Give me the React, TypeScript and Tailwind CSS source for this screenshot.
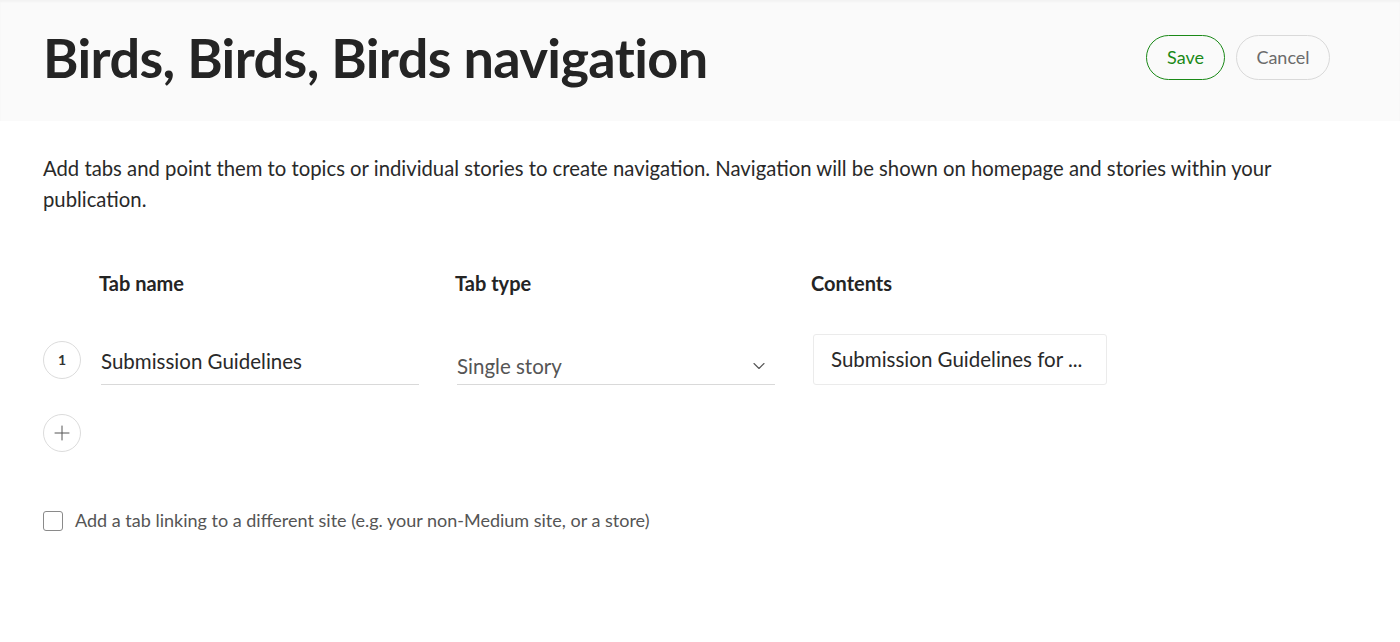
import { ChevronDown, Plus } from "lucide-react";

const font = { fontFamily: "Lato, 'Noto Sans', sans-serif" };

export default function App() {
  return (
    <div className="min-h-[642px] bg-white text-[#292929]" style={font}>
      {/* Header band */}
      <div className="flex h-[121px] items-center justify-between bg-[#fafafa] px-[43px] pb-[6px] shadow-[inset_0_2px_2px_rgba(0,0,0,0.03)]">
        <h1 className="text-[54px] font-bold leading-none tracking-[-0.6px] text-[#242424]">
          Birds, Birds, Birds navigation
        </h1>
        <div className="mr-[27px] flex items-center gap-[11px]">
          <button className="h-[45px] w-[79px] rounded-full border border-[#1a8917] text-[18px] text-[#1a8917]">
            Save
          </button>
          <button className="h-[45px] w-[94px] rounded-full border border-[#d9d9d9] text-[18px] text-[#6b6b6b]">
            Cancel
          </button>
        </div>
      </div>

      <div className="px-[43px]">
        <p className="mt-[32px] max-w-[1270px] text-[20.3px] leading-[31px] text-[#292929]">
          Add tabs and point them to topics or individual stories to create navigation. Navigation will be shown on
          homepage and stories within your publication.
        </p>

        {/* Column headers */}
        <div className="mt-[53px] flex text-[20px] font-bold text-[#242424]">
          <div className="ml-[56px] w-[356px]">Tab name</div>
          <div className="w-[356px]">Tab type</div>
          <div>Contents</div>
        </div>

        {/* Row */}
        <div className="mt-[36px] flex items-center">
          <div className="flex h-[38px] w-[38px] items-center justify-center rounded-full border border-[#dcdcdc] text-[14px] font-bold text-[#333]">
            1
          </div>
          <div className="ml-[20px] w-[318px] self-end border-b border-[#d9d9d9] pb-[10px] text-[20.5px] leading-[26px] text-[#292929]">
            Submission Guidelines
          </div>
          <div className="ml-[38px] flex w-[318px] items-center justify-between self-end border-b border-[#d9d9d9] pb-[5px] text-[20.5px] leading-[26px] text-[#555]">
            <span>Single story</span>
            <ChevronDown className="mr-[6px] h-[20px] w-[20px] text-[#555]" strokeWidth={1.3} />
          </div>
          <div className="ml-[38px] flex h-[51px] w-[294px] items-center rounded-[3px] border border-[#ebebeb] px-[17px] text-[20.5px] text-[#292929]">
            Submission Guidelines for ...
          </div>
        </div>

        <button className="mt-[29px] flex h-[38px] w-[38px] items-center justify-center rounded-full border border-[#dcdcdc] text-[#555]">
          <Plus className="h-[24px] w-[24px]" strokeWidth={1} />
        </button>

        <label className="mt-[55px] flex items-center gap-[12px] text-[18px] text-[#555]">
          <span className="h-[20px] w-[20px] rounded-[3px] border border-[#8a8a8a]" />
          Add a tab linking to a different site (e.g. your non-Medium site, or a store)
        </label>
      </div>
    </div>
  );
}
